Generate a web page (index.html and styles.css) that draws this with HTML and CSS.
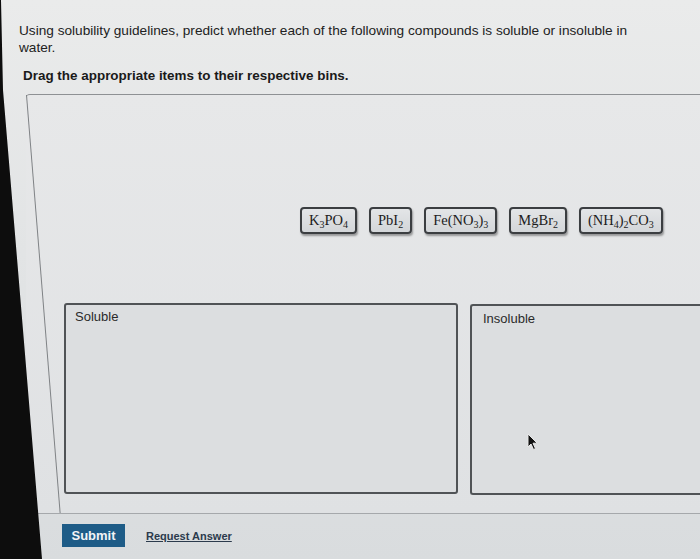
FILE: index.html
```html
<!DOCTYPE html>
<html>
<head>
<meta charset="utf-8">
<link rel="stylesheet" href="styles.css">
</head>
<body>
<div class="page">
  <div class="question">
    <p class="prompt">Using solubility guidelines, predict whether each of the following compounds is soluble or insoluble in water.</p>
    <p class="instr">Drag the appropriate items to their respective bins.</p>
  </div>
  <div class="workspace">
    <div class="source">
      <span class="chip">K<sub>3</sub>PO<sub>4</sub></span>
      <span class="chip">PbI<sub>2</sub></span>
      <span class="chip">Fe(NO<sub>3</sub>)<sub>3</sub></span>
      <span class="chip">MgBr<sub>2</sub></span>
      <span class="chip">(NH<sub>4</sub>)<sub>2</sub>CO<sub>3</sub></span>
    </div>
    <div class="bins">
      <div class="bin bin-left"><span class="bin-label">Soluble</span></div>
      <div class="bin bin-right"><span class="bin-label">Insoluble</span></div>
    </div>
  </div>
  <div class="actions">
    <button class="submit">Submit</button>
    <a class="request">Request Answer</a>
  </div>
</div>
<svg class="cursor" width="12" height="18" viewBox="0 0 12 18"><path d="M1 1 L1 14 L4 11 L6.5 16.5 L8.5 15.6 L6 10.2 L10.2 10.2 Z" fill="#111" stroke="#e8e8e8" stroke-width="1"/></svg>
<div class="edge"></div>
</body>
</html>
```
FILE: styles.css
```css
html, body {
  margin: 0;
  height: 100%;
}
body {
  background: linear-gradient(180deg, #eaebeb 0%, #e2e4e5 45%, #d9dcde 100%);
  font-family: "Liberation Sans", Arial, sans-serif;
  color: #1e1e1e;
  overflow: hidden;
  position: relative;
}
.page {
  padding: 22px 0 0 0;
}
.question {
  padding-left: 19px;
  width: 625px;
}
.prompt {
  margin: 0;
  font-size: 13.65px;
  line-height: 17px;
  color: #222;
}
.instr {
  margin: 12px 0 0 4px;
  font-size: 13.45px;
  font-weight: bold;
  color: #1a1a1a;
}
.workspace {
  position: relative;
  margin: 11px 0 0 26px;
  height: 418px;
  border-top: 1px solid #8e9194;
  border-bottom: 1px solid #a5a8ab;
  border-top-left-radius: 4px;
  background: linear-gradient(180deg, #e7e8e9 0%, #dfe1e3 100%);
}
.workspace::before {
  content: "";
  position: absolute;
  left: 0;
  top: 0;
  width: 1px;
  height: 418px;
  background: #7f8285;
  transform-origin: top left;
  transform: skewX(4.6deg);
}
.source {
  display: flex;
  gap: 12px;
  padding: 112px 0 0 274px;
  height: 96px;
}
.chip {
  display: block;
  height: 23px;
  line-height: 22px;
  padding: 0 7px;
  border: 2px solid #3b3e41;
  border-radius: 4px;
  background: linear-gradient(180deg, #e3e5e7 0%, #d3d6d9 100%);
  box-shadow: 1px 2px 2px rgba(0, 0, 0, 0.35);
  font-family: "Liberation Serif", "Times New Roman", serif;
  font-size: 14.5px;
  color: #1c1c1c;
  white-space: nowrap;
}
.chip sub {
  font-size: 10px;
  vertical-align: -3px;
  line-height: 0;
}
.bins {
  display: flex;
  gap: 12px;
  padding-left: 38px;
}
.bin {
  height: 187px;
  border: 2px solid #505356;
  border-radius: 3px;
  background: #dcdee0;
  position: relative;
}
.bin-left {
  width: 390px;
}
.bin-right {
  flex: 1;
  border-right: none;
  border-radius: 3px 0 0 3px;
  margin-top: 1px;
}
.bin-label {
  display: inline-block;
  margin: 4px 0 0 9px;
  font-size: 13px;
  color: #2a2a2a;
}
.bin-right .bin-label {
  margin: 5px 0 0 11px;
}
.actions {
  display: flex;
  align-items: center;
  gap: 21px;
  padding: 10px 0 0 62px;
}
.submit {
  width: 63px;
  height: 23px;
  border: none;
  background: #1e5c87;
  color: #f2f4f6;
  font-family: "Liberation Sans", Arial, sans-serif;
  font-weight: bold;
  font-size: 13px;
  padding: 0;
}
.request {
  font-size: 11px;
  font-weight: bold;
  color: #2b3a4c;
  text-decoration: underline;
}
.cursor {
  position: absolute;
  left: 527px;
  top: 433px;
}
.edge {
  position: absolute;
  left: 0;
  top: 0;
  width: 50px;
  height: 559px;
  background: #0d0d0d;
  clip-path: polygon(0 0, 1px 0, 3px 90px, 23px 330px, 42px 559px, 0 559px);
}
```
